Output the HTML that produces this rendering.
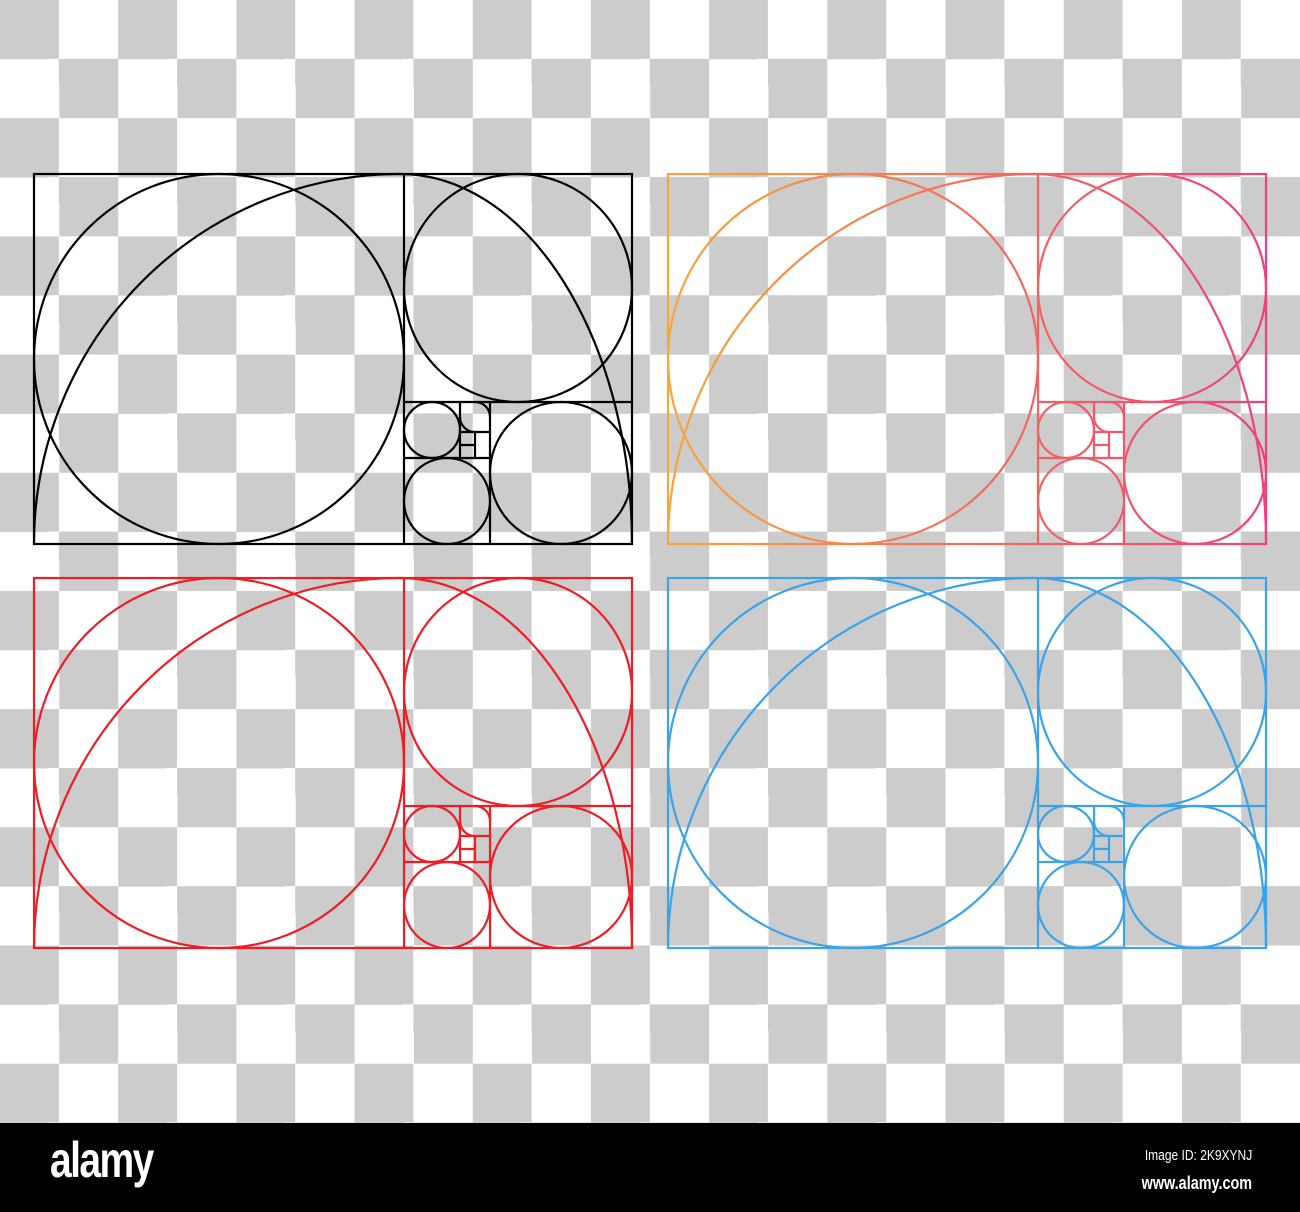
<!DOCTYPE html>
<html><head><meta charset="utf-8"><style>
html,body{margin:0;padding:0}
body{width:1300px;height:1212px;position:relative;overflow:hidden;
background-color:#fff;
background-image:conic-gradient(#fff 0 25%,#cccccc 0 50%,#fff 0 75%,#cccccc 0);
background-size:118.2px 118.2px;}
svg{position:absolute;left:0;top:0}
.bar{position:absolute;left:0;top:1123px;width:1300px;height:89px;background:#000;font-family:"Liberation Sans",sans-serif;color:#fff}
.logo{position:absolute;left:50px;top:8px;font-size:50px;font-weight:bold;letter-spacing:-2px;transform:scaleX(0.78);transform-origin:left top}
.id{position:absolute;right:48px;top:24px;font-size:15px;transform:scaleX(0.8);transform-origin:right top}
.www{position:absolute;right:48px;top:50px;font-size:18px;font-weight:bold;transform:scaleX(0.8);transform-origin:right top}
</style></head><body>
<svg width="1300" height="1212" viewBox="0 0 1300 1212">
<defs>
<linearGradient id="g" gradientUnits="userSpaceOnUse" x1="0" y1="0" x2="598" y2="0">
<stop offset="0" stop-color="#f7a63a"/><stop offset="0.55" stop-color="#f46a5c"/><stop offset="1" stop-color="#ef3f7d"/></linearGradient>
<g id="gr" fill="none" stroke-width="2.2">
<rect x="0" y="0" width="598" height="370"/>
<path d="M370 0V370M370 228H598M456 228V370M370 284H456M426 228V284M426 258H456M441 258V284M426 271H441"/>
<circle cx="185" cy="185" r="185"/>
<circle cx="484" cy="114" r="114"/>
<circle cx="527" cy="299" r="71"/>
<circle cx="413" cy="327" r="43"/>
<circle cx="398" cy="256" r="28"/>
<path d="M426 243A15 15 0 0 0 441 258M441 228A15 15 0 0 1 456 243"/>
<path d="M0 370A366 370 0 0 1 366 0A232 370 0 0 1 598 370"/>
</g>
</defs>
<use href="#gr" x="34" y="174" stroke="#000"/>
<use href="#gr" x="668" y="174" stroke="url(#g)"/>
<use href="#gr" x="34" y="578" stroke="#ee1c25"/>
<use href="#gr" x="668" y="578" stroke="#3aa3ea"/>
</svg>
<div class="bar"><div class="logo">alamy</div><div class="id">Image ID: 2K9XYNJ</div><div class="www">www.alamy.com</div></div>
</body></html>
